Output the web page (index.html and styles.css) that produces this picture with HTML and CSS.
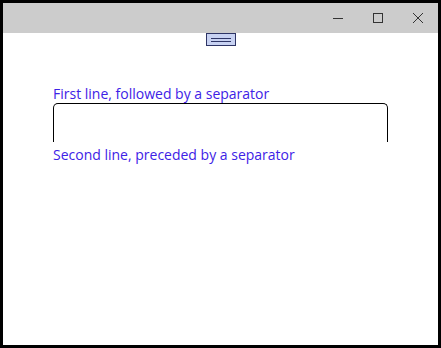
FILE: index.html
```html
<!DOCTYPE html>
<html lang="en">
<head>
    <meta charset="UTF-8">
    <meta name="viewport" content="width=device-width, initial-scale=1.0">
    <title>Separator Demo</title>
    <link rel="stylesheet" href="styles.css">
</head>
<body>
    <div class="window">
        <div class="titlebar">
            <div class="caption-btn">
                <svg width="10" height="10" viewBox="0 0 10 10"><path d="M0 5.5H10" stroke="#333" stroke-width="1"/></svg>
            </div>
            <div class="caption-btn">
                <svg width="10" height="10" viewBox="0 0 10 10"><rect x="0.5" y="0.5" width="9" height="9" fill="none" stroke="#333" stroke-width="1"/></svg>
            </div>
            <div class="caption-btn">
                <svg width="10" height="10" viewBox="0 0 10 10"><path d="M0 0L10 10M10 0L0 10" stroke="#333" stroke-width="1"/></svg>
            </div>
        </div>

        <div class="content">
            <div class="grip">
                <span></span>
                <span></span>
            </div>

            <div class="lines">
                <div class="line">First line, followed by a separator</div>
                <div class="separator"></div>
                <div class="line">Second line, preceded by a separator</div>
            </div>
        </div>
    </div>
</body>
</html>
```

FILE: styles.css
```css
body {
    margin: 0;
    background: #000;
    font-family: "Open Sans", "Noto Sans", sans-serif;
}

.window {
    width: 441px;
    height: 348px;
    box-sizing: border-box;
    border: 3px solid #000;
    background: #fff;
    display: flex;
    flex-direction: column;
}

.titlebar {
    height: 30px;
    background: #cccccc;
    display: flex;
    justify-content: flex-end;
}

.caption-btn {
    width: 40px;
    height: 30px;
    display: flex;
    align-items: center;
    justify-content: center;
}

.caption-btn svg {
    display: block;
}

.content {
    flex: 1;
    display: flex;
    flex-direction: column;
}

.grip {
    align-self: center;
    width: 30px;
    height: 13px;
    box-sizing: border-box;
    border: 1px solid #2e3566;
    background: #c8d2f2;
    display: flex;
    flex-direction: column;
    justify-content: center;
    gap: 2px;
    padding: 0 4px;
}

.grip span {
    display: block;
    height: 1px;
    background: #2e3566;
}

.lines {
    margin: 38px 50px 0 50px;
    width: 335px;
}

.line {
    color: #3d22e6;
    font-size: 14px;
    line-height: 19px;
}

.separator {
    height: 39px;
    margin-bottom: 3px;
    box-sizing: border-box;
    border: 1px solid #000;
    border-bottom: none;
    border-radius: 5px 5px 0 0;
}
```
